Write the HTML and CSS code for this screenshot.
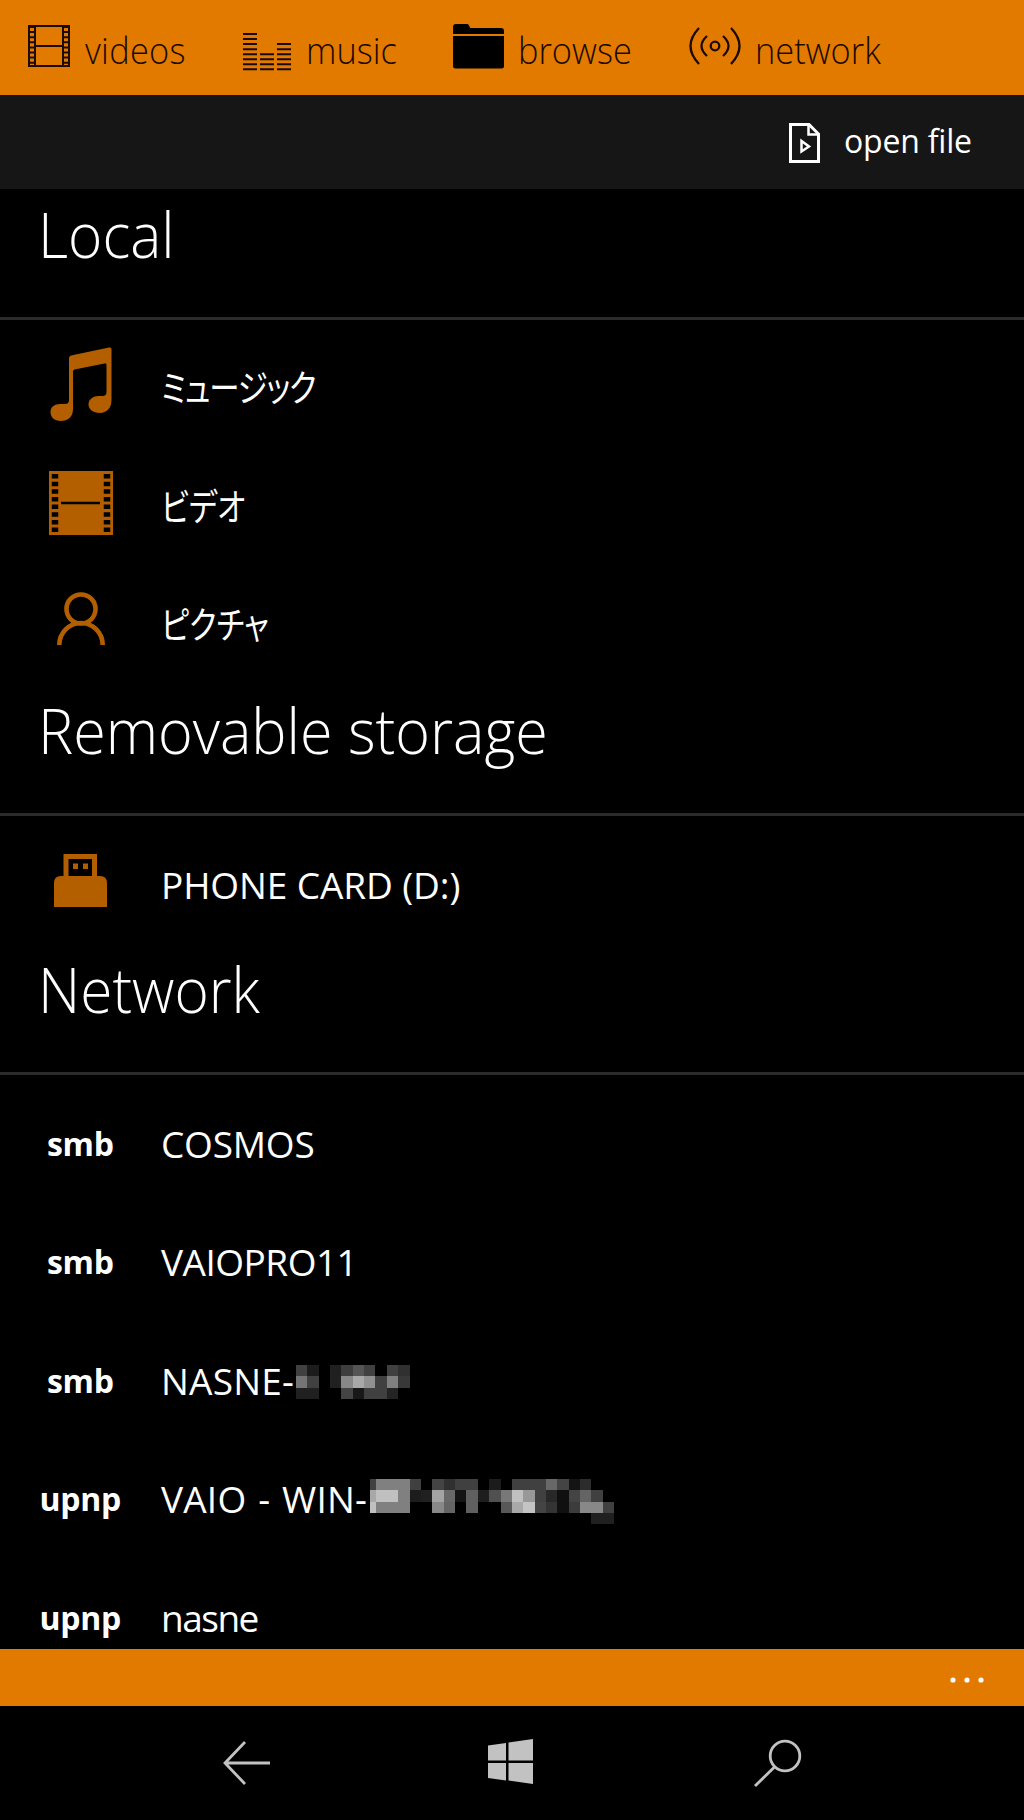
FILE: index.html
```html
<!DOCTYPE html>
<html lang="ja">
<head>
    <meta charset="UTF-8">
    <meta name="viewport" content="width=device-width, initial-scale=1.0">
    <title>browse</title>
    <link rel="stylesheet" href="styles.css">
</head>
<body>
    <nav class="tabs">
        <a class="tab">
            <svg class="tab-icon film" viewBox="0 0 42 42">
                <path d="M1 1h40v40H1zM7 1v40M35 1v40M7 21h28" fill="none" stroke="#1c0a00" stroke-width="2"/>
                <path d="M4 1v40M38 1v40" fill="none" stroke="#1c0a00" stroke-width="5" stroke-dasharray="2 3.1"/>
            </svg>
            <span class="tab-label videos">videos</span>
        </a>
        <a class="tab">
            <svg class="tab-icon bars" viewBox="0 0 48 38">
                <path d="M7 0v38" stroke="#1c0a00" stroke-width="14" stroke-dasharray="2 3.05"/>
                <path d="M24 20.2v18" stroke="#1c0a00" stroke-width="14" stroke-dasharray="2 3.05"/>
                <path d="M41 10.1v28" stroke="#1c0a00" stroke-width="14" stroke-dasharray="2 3.05"/>
            </svg>
            <span class="tab-label music">music</span>
        </a>
        <a class="tab">
            <svg class="tab-icon folder" viewBox="0 0 51 45">
                <path d="M0 10V3q0-3 3-3h11q2 0 3 4h31q3 0 3 3v3z"/>
                <path d="M0 12h51v30q0 2.500-2.500 2.500h-46Q0 44.500 0 42z"/>
            </svg>
            <span class="tab-label browse">browse</span>
        </a>
        <a class="tab">
            <svg class="tab-icon signal" viewBox="0 0 52 38" fill="none" stroke="#1c0a00" stroke-width="2.300">
                <circle cx="26" cy="19" r="4.300"/>
                <path d="M18 9q-11 10 0 20M34 9q11 10 0 20M10 1q-17 18 0 36M42 1q17 18 0 36"/>
            </svg>
            <span class="tab-label network">network</span>
        </a>
    </nav>

    <div class="toolbar">
        <svg class="file-icon" viewBox="0 0 31 40" fill="none" stroke="#fff" stroke-width="3">
            <path d="M1.500 1.500H20L29.500 11v27.500h-28z"/>
            <path d="M19.500 2v9.500H29" stroke-width="2.500"/>
            <path d="M12.500 18v10.500l7.500-5z" stroke-width="2.500"/>
        </svg>
        <span class="open-file">open file</span>
    </div>

    <main class="content">
        <section>
            <h2 class="heading local"><span>Local</span></h2>
            <div class="row">
                <div class="row-icon">
                    <svg class="note" viewBox="0 0 62 74" fill="#b35f00">
                        <path d="M19 11q0-2 2-2.500L59 .5q2.500-.5 2.500 1.500v51c0 8-5 13-11.500 13-7 0-11.500-4-11.500-8.500 0-5.500 5-8.500 10-8.500h4q4 0 4-4V18q0-2-2-1.600L24.500 22.500q-1.500.3-1.500 2.500v37c0 8-5 12-12 12C4 74 .5 70 .5 65c0-5 4-8 9.500-8h5q4 0 4-4z"/>
                    </svg>
                </div>
                <span class="name jp music-folder">ミュージック</span>
            </div>
            <div class="row">
                <div class="row-icon">
                    <svg class="strip" viewBox="0 0 64 64">
                        <path d="M0 0h64v64H0z" fill="#b35f00"/>
                        <path d="M6 3v59M58 3v59" stroke="#000" stroke-width="6.500" stroke-dasharray="4.500 3.150" fill="none"/>
                        <path d="M12 32h39" stroke="#000" stroke-width="2.500"/>
                    </svg>
                </div>
                <span class="name jp">ビデオ</span>
            </div>
            <div class="row">
                <div class="row-icon">
                    <svg class="person" viewBox="0 0 48 53" fill="none" stroke="#b35f00" stroke-width="4.600">
                        <circle cx="24" cy="17" r="14.500"/>
                        <path d="M2.300 53a21.700 22 0 0 1 43.400 0"/>
                    </svg>
                </div>
                <span class="name jp">ピクチャ</span>
            </div>
        </section>

        <section>
            <h2 class="heading"><span>Removable storage</span></h2>
            <div class="row">
                <div class="row-icon">
                    <svg class="usb" viewBox="0 0 53 53" fill="#b35f00">
                        <path d="M9.500 0h33.500v22h3q7 0 7 7v24H0V29q0-7 7-7h2.500zM14.500 5v17H38V5z" fill-rule="evenodd"/>
                        <path d="M19 9.500h5v5.500h-5zM29 9.500h5v5.500h-5z"/>
                    </svg>
                </div>
                <span class="name card">PHONE CARD (D:)</span>
            </div>
        </section>

        <section>
            <h2 class="heading net"><span>Network</span></h2>
            <div class="row">
                <div class="row-icon protocol">smb</div>
                <span class="name cosmos">COSMOS</span>
            </div>
            <div class="row">
                <div class="row-icon protocol">smb</div>
                <span class="name vaiopro">VAIOPRO11</span>
            </div>
            <div class="row">
                <div class="row-icon protocol">smb</div>
                <span class="name nasne-host">NASNE-</span>
                <svg class="mosaic mosaic-nasne" id="mosaicNasne" viewBox="0 0 10 3" preserveAspectRatio="none"></svg>
            </div>
            <div class="row">
                <div class="row-icon protocol">upnp</div>
                <span class="name vaio-win">VAIO - WIN-</span>
                <svg class="mosaic mosaic-vaio" id="mosaicVaio" viewBox="-0.5 0 21.500 4" preserveAspectRatio="none"></svg>
            </div>
            <div class="row">
                <div class="row-icon protocol">upnp</div>
                <span class="name nasne">nasne</span>
            </div>
        </section>
    </main>

    <div class="appbar">
        <svg class="dots" viewBox="0 0 34 6" fill="#fff">
            <circle cx="3" cy="3" r="2.600"/>
            <circle cx="17" cy="3" r="2.600"/>
            <circle cx="31" cy="3" r="2.600"/>
        </svg>
    </div>

    <footer class="navbar">
        <svg class="back" viewBox="0 0 48 44" fill="none" stroke="#c2c2c2" stroke-width="2.800">
            <path d="M22 1L2 22l20 21M2 22h45"/>
        </svg>
        <svg class="start" viewBox="0 0 45 45" fill="#c2c2c2">
            <path d="M0 6.500l18-2.500v17.500H0zM20.500 3.500L45 0v21.500H20.500zM0 24h18v17.500L0 39zM20.500 24H45v21l-24.500-3.500z"/>
        </svg>
        <svg class="search" viewBox="0 0 48 48" fill="none" stroke="#c2c2c2" stroke-width="2.800">
            <circle cx="31" cy="17" r="14.800"/>
            <path d="M20.500 28L1 47"/>
        </svg>
    </footer>

    <script>
        // grey level of each cell, row by row
        const nasneCells = [
            '40 1c 00 20 3e 55 40 00 40 30',
            '74 40 00 20 88 a8 90 40 80 38',
            '20 20 00 00 44 18 40 40 24 00'
        ];
        const vaioCells = [
            '40 80 80 80 40 00 44 30 40 40 00 1c 00 40 40 40 68 44 14 2c 00 00',
            'a8 c0 c0 80 1c 20 a4 68 14 60 1e 50 78 c0 98 40 28 10 44 64 40 00',
            'c0 80 80 80 00 00 88 64 00 60 00 00 58 a8 c4 44 34 10 3c 88 88 40',
            '00 00 00 00 00 00 00 00 00 00 00 00 00 00 00 00 00 00 00 00 20 20'
        ];

        function drawMosaic(id, rows, offset) {
            const svg = document.getElementById(id);
            rows.forEach((row, y) => {
                row.split(' ').forEach((c, i) => {
                    if (c === '00') return;
                    const rect = document.createElementNS('http://www.w3.org/2000/svg', 'rect');
                    rect.setAttribute('x', i - offset);
                    rect.setAttribute('y', y);
                    rect.setAttribute('width', 1);
                    rect.setAttribute('height', 1);
                    rect.setAttribute('fill', `#${c}${c}${c}`);
                    svg.appendChild(rect);
                });
            });
        }

        drawMosaic('mosaicNasne', nasneCells, 0);
        drawMosaic('mosaicVaio', vaioCells, 1);
    </script>
</body>
</html>
```

FILE: styles.css
```css
* {
    box-sizing: border-box;
    margin: 0;
    padding: 0;
}

body {
    width: 1024px;
    height: 1820px;
    background: #000;
    color: #fff;
    font-family: "Open Sans", "Noto Sans CJK JP", sans-serif;
    display: flex;
    flex-direction: column;
    overflow: hidden;
}

svg {
    display: block;
    flex: none;
}

.tabs {
    height: 95px;
    flex: none;
    display: flex;
    background: #e37a00;
    color: #1c0a00;
    padding-left: 28px;
}

.tab {
    display: flex;
    align-items: flex-start;
}

.tab-label {
    font-size: 37px;
    font-weight: 300;
    line-height: 50px;
    padding-top: 25px;
    white-space: nowrap;
    transform: scaleX(0.93);
    transform-origin: left;
}

.film { width: 42px; height: 42px; margin: 25px 15px 0 0; }
.bars { width: 48px; height: 38px; margin: 33px 15px 0 0; }
.folder { width: 51px; height: 45px; margin: 24px 14px 0 0; }
.signal { width: 52px; height: 38px; margin: 27px 14px 0 0; }

.videos { width: 158px; letter-spacing: 0.3px; }
.music { width: 147px; }
.browse { width: 171px; }

.toolbar {
    height: 94px;
    flex: none;
    display: flex;
    background: #161616;
    padding-left: 789px;
}

.file-icon { width: 31px; height: 40px; margin-top: 28px; }

.open-file {
    font-size: 32px;
    line-height: 44px;
    margin: 24px 0 0 24px;
    letter-spacing: -0.2px;
    white-space: nowrap;
}

.content {
    height: 1460px;
    flex: none;
    overflow: hidden;
}

.heading {
    height: 140.300px;
    border-bottom: 3px solid #2b2b2b;
    padding: 9px 0 0 38px;
    font-size: 63px;
    font-weight: 300;
    line-height: 90px;
    white-space: nowrap;
}

.heading span {
    display: inline-block;
    transform: scaleX(0.94);
    transform-origin: left;
}

.local {
    margin-top: -9px;
}

.local span,
.net span {
    transform: scaleX(0.93);
}

.row {
    height: 118.600px;
    display: flex;
    align-items: center;
    padding-top: 12px;
}

.row-icon {
    width: 161.500px;
    margin-right: -0.500px;
    flex: none;
    display: flex;
    justify-content: center;
}

.protocol {
    font-size: 32px;
    font-weight: 700;
    letter-spacing: -0.3px;
    padding: 5px 1px 0 0;
}

.name {
    font-size: 37px;
    line-height: 50px;
    padding-top: 6px;
    white-space: nowrap;
}

.card { letter-spacing: -0.100px; }
.cosmos { letter-spacing: -0.200px; }
.vaiopro { letter-spacing: -0.500px; }
.nasne { letter-spacing: -1.500px; }

.nasne-host {
    width: 135px;
    letter-spacing: 0.200px;
}

.vaio-win {
    width: 209px;
    letter-spacing: 0.200px;
    word-spacing: 2px;
}

.jp {
    font-family: "Noto Sans CJK JP", sans-serif;
    padding-top: 1px;
    transform: scaleX(0.82);
    transform-origin: left;
    font-feature-settings: "palt";
}

.music-folder { letter-spacing: -1.300px; }

.note { width: 62px; height: 74px; margin-bottom: 4px; }
.strip { width: 64px; height: 64px; margin-bottom: 3px; }
.person { width: 48px; height: 53px; margin-bottom: 8px; }
.usb { width: 53px; height: 53px; margin-bottom: 3px; }

.mosaic-nasne { width: 113.500px; height: 34px; margin-top: 9px; }
.mosaic-vaio { width: 244px; height: 45.300px; margin-top: 11px; }

.mosaic {
    shape-rendering: crispEdges;
}

.appbar {
    height: 57px;
    flex: none;
    background: #e37a00;
    display: flex;
    justify-content: flex-end;
    padding: 28px 40px 0 0;
}

.dots { width: 34px; height: 6px; }

.navbar {
    flex: 1;
    display: flex;
    padding-left: 223px;
}

.back { width: 48px; height: 44px; margin-top: 35px; }
.start { width: 45px; height: 45px; margin: 33px 0 0 217px; }
.search { width: 48px; height: 48px; margin: 33px 0 0 221px; }
```
